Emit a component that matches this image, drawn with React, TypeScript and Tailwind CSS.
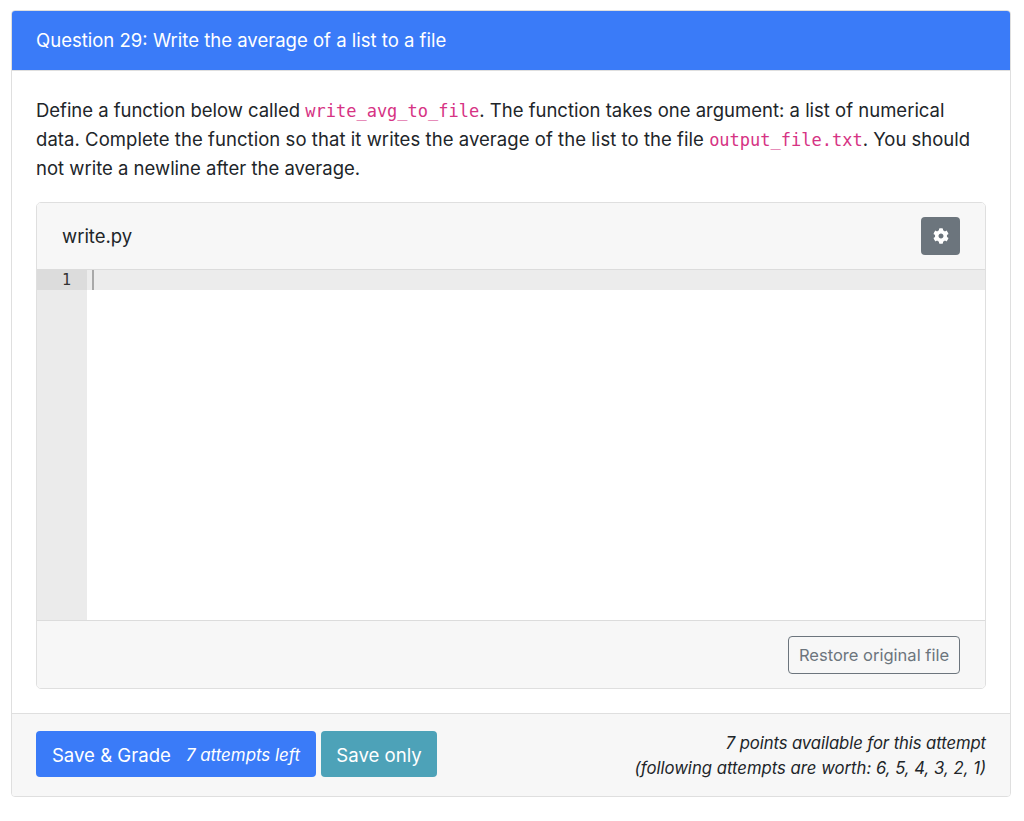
import { FaCog } from "react-icons/fa";

export default function App() {
  return (
    <div className="bg-white h-[821px] pt-[10px] px-[11px] font-['Inter',sans-serif] text-[#212529] text-[18.5px] leading-[29px]">
      <div className="w-[1000px] border border-[#dfdfdf] rounded-[4px] overflow-hidden">
        <div className="h-[60px] bg-[#3a7bf8] text-white flex items-center px-6 text-[18.55px] border-b border-[#dfdfdf]">
          Question 29: Write the average of a list to a file
        </div>
        <div className="px-6 pt-[25px] pb-[24px] bg-white">
          <p className="mb-[19px]">
            <span className="tracking-[-0.03px]">Define a function below called</span>{" "}
            <code className="font-['DejaVu_Sans_Mono',monospace] text-[#d63384] text-[17px] leading-none">write_avg_to_file</code>.
            The function takes one argument: a list of numerical{" "}
            <span className="tracking-[0.055px]">data. Complete the function so that it writes the average of the list to the file</span>{" "}
            <code className="font-['DejaVu_Sans_Mono',monospace] text-[#d63384] text-[17px] leading-none">output_file.txt</code>.
            You should not write a newline after the average.
          </p>
          <div className="border border-[#dfdfdf] rounded-[5px] overflow-hidden">
            <div className="h-[67px] bg-[#f7f7f7] flex items-center justify-between pl-[25px] pr-[25px] border-b border-[#dcdcdc]">
              <span>write.py</span>
              <button className="w-[39px] h-[38px] rounded-[4px] bg-[#6c757d] text-white flex items-center justify-center">
                <FaCog className="w-4 h-4" />
              </button>
            </div>
            <div className="h-[350px] flex bg-white">
              <div className="w-[50px] bg-[#ebebeb]">
                <div className="h-[20px] bg-[#dcdcdc] text-right pr-[16px] font-['DejaVu_Sans_Mono',monospace] text-[15px] leading-[20px] text-[#333333]">1</div>
              </div>
              <div className="flex-1">
                <div className="h-[20px] bg-[#ececec] pl-[5px]">
                  <div className="w-[2px] h-[20px] bg-[#a8a8a8]"></div>
                </div>
              </div>
            </div>
            <div className="h-[68px] bg-[#f7f7f7] border-t border-[#dcdcdc] flex items-center justify-end pr-[25px]">
              <button className="h-[38px] w-[172px] rounded-[4px] border border-[#6c757d] text-[#6c757d] text-[16.55px] flex items-center justify-center pt-[2px]">
                Restore original file
              </button>
            </div>
          </div>
        </div>
        <div className="h-[83px] bg-[#f7f7f7] border-t border-[#dfdfdf] flex items-center justify-between px-6 pb-[3px]">
          <div className="flex gap-[5px]">
            <button className="h-[46px] w-[280px] rounded-[4px] bg-[#3a7bf8] text-white flex items-center justify-center text-[18.6px] pt-[3px]">
              Save &amp; Grade
              <span className="italic text-[16.9px] ml-[15px]">7 attempts left</span>
            </button>
            <button className="h-[46px] w-[116px] rounded-[4px] bg-[#4da2b8] text-white flex items-center justify-center text-[18.6px] pt-[3px]">
              Save only
            </button>
          </div>
          <div className="text-right italic text-[16.7px] leading-[25px] mt-[4px]">
            <div className="tracking-[-0.09px]">7 points available for this attempt</div>
            <div>(following attempts are worth: 6, 5, 4, 3, 2, 1)</div>
          </div>
        </div>
      </div>
    </div>
  );
}
